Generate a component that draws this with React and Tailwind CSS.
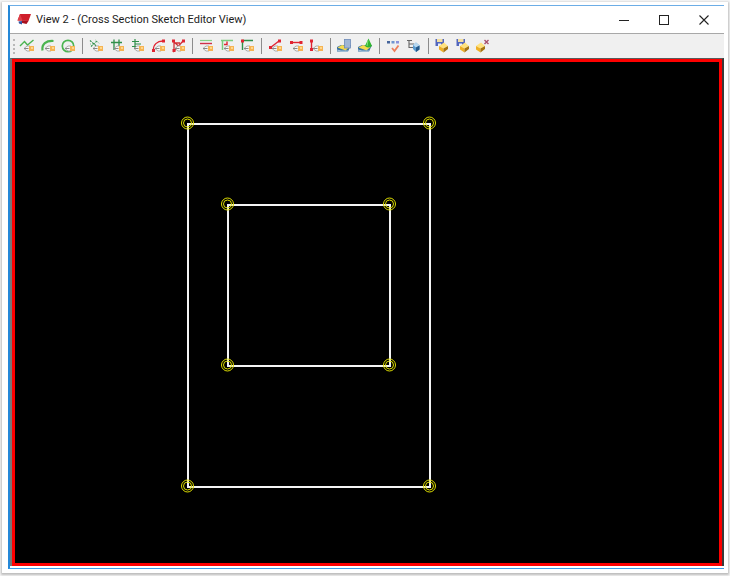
import React from "react";

// Small pointing hand shared by all the sketch tools
const Hand = () => (
  <g>
    <path d="M5 10.5 L8 8 H11 V13 H8 Z" fill="#f7f7f7" stroke="#a4a4a4" strokeWidth="0.9" />
    <path d="M5 10.5 H9.5" stroke="#888" strokeWidth="1" />
    <rect x="10" y="8" width="5" height="5" fill="#f6b453" />
    <rect x="12" y="9" width="2" height="2" fill="#ffd78c" />
  </g>
);

const Disk = () => (
  <g>
    <rect x="1.5" y="1" width="8.5" height="7" fill="#5266bd" />
    <rect x="3" y="1" width="5.5" height="3" fill="#f3dfa0" />
    <rect x="4" y="5.5" width="3" height="2.5" fill="#e9eefc" />
  </g>
);

const Cube = () => (
  <g>
    <path d="M5 8 L10 4.5 L14 8 L9.5 10.5 Z" fill="#ffe27c" />
    <path d="M5 8 L9.5 10.5 V14.5 L5 11.5 Z" fill="#efb025" />
    <path d="M14 8 L9.5 10.5 V14.5 L14 11 Z" fill="#a5740f" />
  </g>
);

const Sheet = () => (
  <g>
    <path d="M1 9 L5 7 H15 L12 13.5 H1 Z" fill="#3a72a0" />
    <path d="M1.5 9.5 L6 7 L13.5 9 L9.5 12.5 Z" fill="#f4da50" />
    <path d="M1 12 L5 13 H12" stroke="#a9c9e4" fill="none" />
  </g>
);

const green = "#4bb450";
const dark = "#2f8f4a";
const red = "#e02432";

const groups = [
  {
    width: "w-[57px]",
    tools: [
      {
        name: "Polyline",
        art: <><path d="M1 8 L5.5 3.5 L8.5 7 L14.5 2" fill="none" stroke={green} strokeWidth="1.4" /><Hand /></>,
      },
      {
        name: "Arc",
        art: <><path d="M2.5 12.5 C1.5 6 6 2.5 13.5 3" fill="none" stroke={green} strokeWidth="2.2" /><Hand /></>,
      },
      {
        name: "Circle",
        art: <><circle cx="8" cy="8" r="5.7" fill="none" stroke={green} strokeWidth="1.7" /><Hand /></>,
      },
    ],
  },
  {
    width: "w-[98px]",
    tools: [
      {
        name: "Trim",
        art: <><path d="M2 2.5 L10 9.5 M3 8.5 L9.5 2.5" fill="none" stroke={dark} strokeWidth="1.1" strokeDasharray="2 1" /><path d="M7.5 2 L12 6 M2 6 H6" fill="none" stroke="#7db98b" strokeDasharray="1 1" /><Hand /></>,
      },
      {
        name: "Extend both",
        art: <><path d="M5 1.5 V12 M10 1.5 V8 M2 4.5 H13" fill="none" stroke={dark} strokeWidth="1.3" /><Hand /></>,
      },
      {
        name: "Extend one",
        art: <><path d="M6 1 V11 M3 3.5 H10 M6 6 H12 M3 8.5 H7" fill="none" stroke={dark} strokeWidth="1.2" /><Hand /></>,
      },
      {
        name: "Fillet",
        art: <><path d="M3.5 12 C3 7 7 3 13 3" fill="none" stroke={red} strokeWidth="1.3" /><Hand /><path d="M12 1.5 h3 v3 h-3z M2 11 h3 v3 h-3z" fill={red} /></>,
      },
      {
        name: "Chamfer",
        art: <><path d="M4 3 V13 L13 3 M4 4 L13 12 M4 5 H10" fill="none" stroke="#cf3038" strokeWidth="1.3" /><Hand /><path d="M2 1.5 h3 v3 h-3z M12 1.5 h3 v3 h-3z M2.5 11 h3 v3 h-3z" fill={red} /></>,
      },
    ],
  },
  {
    width: "w-[57px]",
    tools: [
      {
        name: "Parallel",
        art: <><path d="M2 2.5 H14" stroke="#86d088" strokeWidth="1.2" /><path d="M2 5.5 H14" stroke="#cf3048" strokeWidth="1.4" /><Hand /></>,
      },
      {
        name: "Perpendicular",
        art: <><path d="M2 2.5 H14 M3.5 2.5 V12" fill="none" stroke="#7bcb7d" strokeWidth="1.5" /><path d="M5 6.5 H8 V3.5" fill="none" stroke={red} strokeWidth="1.4" /><Hand /></>,
      },
      {
        name: "Coincident",
        art: <><path d="M3 2.5 H14 M3.5 3 V12" fill="none" stroke={dark} strokeWidth="1.4" /><path d="M2 1.5 h3 v3 h-3z" fill={red} /><Hand /></>,
      },
    ],
  },
  {
    width: "w-[57px]",
    tools: [
      {
        name: "Distance",
        art: <><path d="M3.5 9.5 L12 3" stroke={red} strokeWidth="1.4" /><path d="M2 8 h3 v3 h-3z M11 1.5 h3 v3 h-3z" fill={red} /><Hand /></>,
      },
      {
        name: "Horizontal distance",
        art: <><path d="M3 4.5 H13" stroke={red} strokeWidth="1.4" /><path d="M2 3 h3 v3 h-3z M11.5 3 h3 v3 h-3z" fill={red} /><Hand /></>,
      },
      {
        name: "Vertical distance",
        art: <><path d="M3.5 3 V12" stroke={red} strokeWidth="1.4" /><path d="M2 1.5 h3 v3 h-3z M2 10 h3 v3 h-3z" fill={red} /><Hand /></>,
      },
    ],
  },
  {
    width: "w-[37px]",
    tools: [
      {
        name: "Draw plane",
        art: <><Sheet /><rect x="8.5" y="1.5" width="6" height="8.5" fill="#9fb6d6" stroke="#6e8bb8" strokeWidth="0.8" /></>,
      },
      {
        name: "Draw solid",
        art: <><Sheet /><path d="M11.5 0.5 L15 8 Q11.5 11 8 8 Z" fill="#2fb52f" /><path d="M11 2.5 L10 8" stroke="#7fe07a" /></>,
      },
    ],
  },
  {
    width: "w-[37px]",
    tools: [
      {
        name: "Check sketch",
        art: <><path d="M2 3 h3 v2.5 h-3z" fill="#46659c" /><path d="M6.5 3 h3 v2.5 h-3z" fill="#6f95cf" /><path d="M11 3 h3 v2.5 h-3z" fill="#8a93dc" /><path d="M7 10 L9.5 13 L13.5 7.5" fill="none" stroke="#ee7f5c" strokeWidth="1.8" /></>,
      },
      {
        name: "Sketch browser",
        art: <><path d="M3 2 V9.5 H7 M3 6 H8 M1 2.5 H6" fill="none" stroke="#666" strokeWidth="1.1" /><path d="M7 7 L10 4.5 L13.5 7.5 V11.5 L10 14 L7 11 Z" fill="#5a9bd0" /><path d="M7 7 L10 4.5 L13.5 7.5 L10 9.5 Z" fill="#b8d8ef" /><path d="M13.5 7.5 V11.5 L10 14 V9.5 Z" fill="#265a8a" /></>,
      },
    ],
  },
  {
    width: "w-[57px]",
    tools: [
      { name: "Save sketch", art: <><Disk /><Cube /></> },
      { name: "Save sketch as", art: <><Disk /><Cube /></> },
      {
        name: "Delete sketch",
        art: <><g transform="translate(-4 0)"><Cube /></g><path d="M9.5 2 L13.5 6 M13.5 2 L9.5 6" stroke="#a8506c" strokeWidth="1.4" /></>,
      },
    ],
  },
];

const outer = { x: 173, y: 62, width: 242, height: 363 };
const inner = { x: 213, y: 143, width: 162, height: 161 };

const corners = ({ x, y, width, height }) => [
  [x, y],
  [x + width, y],
  [x, y + height],
  [x + width, y + height],
];

function TitleBar() {
  return (
    <header className="flex h-7 items-center justify-between border-b border-[#a8a8a8] bg-white pl-[6px]">
      <div className="flex items-center gap-1">
        <svg className="h-4 w-4" viewBox="0 0 16 16">
          <path d="M4 2 H15 L12.5 9 L1.5 8.5 Z" fill="#cf1f2b" />
          <path d="M4 2 L6.5 8.5 L1.5 8.5 Z" fill="#dd4049" />
          <path d="M6 8.5 L12.5 9 L10.5 12 L6 11 Z" fill="#a8121f" />
          <path d="M2.5 9.5 L6 9 V12.5 L3 11.5 Z" fill="#2f57a5" />
        </svg>
        <h1 className="text-[11px] leading-4 text-[#1c1c1c]">
          View 2 - (Cross Section Sketch Editor View)
        </h1>
      </div>
      <div className="flex text-[#222]">
        <button aria-label="Minimize" className="flex h-6 w-10 items-center justify-center">
          <svg className="h-[10px] w-[10px]" viewBox="0 0 10 10">
            <path d="M0 5.5 H10" stroke="currentColor" />
          </svg>
        </button>
        <button aria-label="Maximize" className="flex h-6 w-10 items-center justify-center">
          <svg className="h-[10px] w-[10px]" viewBox="0 0 10 10">
            <rect x="0.5" y="0.5" width="9" height="9" fill="none" stroke="currentColor" />
          </svg>
        </button>
        <button aria-label="Close" className="flex h-6 w-10 items-center justify-center">
          <svg className="h-[10px] w-[10px]" viewBox="0 0 10 10">
            <path d="M0.5 0.5 L9.5 9.5 M9.5 0.5 L0.5 9.5" stroke="currentColor" strokeWidth="1.1" />
          </svg>
        </button>
      </div>
    </header>
  );
}

function Toolbar() {
  return (
    <div role="toolbar" aria-label="Sketch tools" className="flex h-6 items-center bg-[#f0f0f0] pl-[3px]">
      <div className="mr-1 h-[15px] w-[2px] border-l-2 border-dotted border-[#b8b8b8]" />
      {groups.map((group, i) => (
        <React.Fragment key={i}>
          {i > 0 && (
            <div className="flex w-3 shrink-0 justify-center">
              <div className="h-4 w-px bg-[#8c8c8c]" />
            </div>
          )}
          <div className={`flex shrink-0 justify-between ${group.width}`}>
            {group.tools.map((tool) => (
              <button key={tool.name} aria-label={tool.name}>
                <svg className="block h-4 w-4" viewBox="0 0 16 16">
                  {tool.art}
                </svg>
              </button>
            ))}
          </div>
        </React.Fragment>
      ))}
    </div>
  );
}

function SketchCanvas() {
  return (
    <main className="border-x-2 border-t border-t-[#5a5a5a] border-r-[#3a3a3a] border-l-[#777] bg-black">
      <div className="border-3 border-[#fe0000]">
        <svg className="block h-[501px] w-full" role="img" aria-label="Cross section sketch">
          <g fill="none" stroke="#f4f4f4" strokeWidth="2">
            <rect {...outer} />
            <rect {...inner} />
          </g>
          <g fill="none" stroke="#dede00">
            {[...corners(outer), ...corners(inner)].map(([x, y]) => (
              <g key={`${x}-${y}`}>
                <circle cx={x - 0.5} cy={y - 1} r="6" />
                <circle cx={x - 0.5} cy={y - 1} r="4" />
              </g>
            ))}
          </g>
        </svg>
      </div>
    </main>
  );
}

export default function App() {
  return (
    <div className="bg-[#f6f6f6] px-[2px] pt-[2px] pb-[3px] font-['Roboto','Open_Sans',sans-serif]">
      <div className="bg-white pt-[3px] pr-1 pb-1 pl-[6px] shadow-[0_1px_2px_1px_#bdbdbd]">
        <div className="border-t border-b border-l-2 border-t-[#6cade6] border-b-[#3c9be8] border-l-[#2588d8] pb-[2px]">
          <TitleBar />
          <Toolbar />
          <SketchCanvas />
        </div>
      </div>
    </div>
  );
}
